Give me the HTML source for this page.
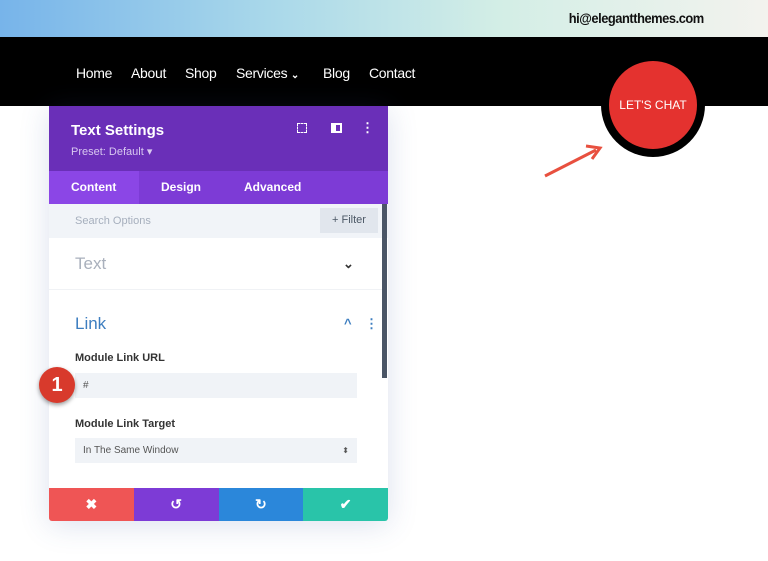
<!DOCTYPE html>
<html><head><meta charset="utf-8"><style>
*{margin:0;padding:0;box-sizing:border-box}
body{width:768px;height:561px;overflow:hidden;background:#fff;font-family:"Liberation Sans",sans-serif;position:relative}
.top{position:absolute;left:0;top:0;width:768px;height:37px;background:linear-gradient(90deg,#77b4ea 0%,#a9d8ea 35%,#d3eee6 65%,#f3f3ee 100%)}
.email{position:absolute;right:64px;top:10px;font-size:14px;font-weight:bold;color:#111;letter-spacing:-0.5px;transform:scaleX(0.92);transform-origin:right}
.nav{position:absolute;left:0;top:37px;width:768px;height:69px;background:#000}
.nav span{position:absolute;top:28px;color:#fff;font-size:14px;letter-spacing:-0.3px}
.chat{position:absolute;left:601px;top:53px;width:104px;height:104px;border-radius:50%;background:#000}
.chat div{position:absolute;left:8px;top:8px;width:88px;height:88px;border-radius:50%;background:#e4322f;color:#fff;font-size:12px;text-align:center;line-height:88px}
.panel{position:absolute;left:49px;top:106px;width:339px;height:415px;background:#fff;box-shadow:0 4px 30px rgba(60,90,160,.18);border-radius:0 0 3px 3px;overflow:hidden;font-family:"Liberation Sans",sans-serif}
.ph{height:65px;background:#6a2fb8;position:relative}
.ph .t{position:absolute;left:22px;top:16px;color:#fff;font-size:15px;font-weight:bold}
.ph .p{position:absolute;left:22px;top:39px;color:#d8c8f0;font-size:11px}
.tabs{height:33px;background:#7d3bd6;position:relative}
.tabs span{position:absolute;top:9px;color:#fff;font-size:12px;font-weight:bold}
.act{position:absolute;left:0;top:0;width:90px;height:33px;background:#8b46e6}
.search{height:34px;background:#f1f4f8;position:relative}
.search span{position:absolute;left:26px;top:11px;font-size:11px;color:#a6afbd}
.filter{position:absolute;left:271px;top:4px;width:58px;height:25px;background:#e1e6ed;font-size:11px;color:#4c5866;text-align:center;line-height:25px}
.sb{position:absolute;left:333px;top:98px;width:5px;height:174px;background:#4a5566}
.row{position:absolute;left:0;width:333px}
.lbl{position:absolute;left:26px;font-size:11px;font-weight:bold;color:#333}
.inp{position:absolute;left:26px;width:282px;height:25px;background:#f0f3f7;font-size:10px;color:#555;padding-left:8px;line-height:25px}
.btns{position:absolute;left:0;top:382px;width:339px;height:33px;display:flex}
.btns div{flex:1;color:#fff;font-size:14px;font-weight:bold;text-align:center;line-height:33px}
</style></head><body>
<div class="top"><div class="email">hi@elegantthemes.com</div></div>
<div class="nav">
<span style="left:76px">Home</span><span style="left:131px">About</span><span style="left:185px">Shop</span><span style="left:236px">Services <b style="font-size:10px">&#8964;</b></span><span style="left:323px">Blog</span><span style="left:369px">Contact</span>
</div>
<div class="chat"><div>LET'S CHAT</div></div>
<svg style="position:absolute;left:540px;top:140px" width="70" height="42"><line x1="5" y1="36" x2="56" y2="10" stroke="#e8503f" stroke-width="3"/><path d="M46 6 L60 8 L52 19" fill="none" stroke="#e8503f" stroke-width="3"/></svg>
<div class="panel">
<div class="ph"><div class="t">Text Settings</div><div class="p">Preset: Default ▾</div>
<span style="position:absolute;left:248px;top:17px;width:10px;height:10px;border:1.5px dashed #fff"></span>
<span style="position:absolute;left:282px;top:17px;width:11px;height:10px;border:2px solid #fff;border-left-width:5px"></span>
<span style="position:absolute;left:312px;top:14px;color:#fff;font-size:13px;font-weight:bold">⋮</span>
</div>
<div class="tabs"><div class="act"></div><span style="left:22px">Content</span><span style="left:112px">Design</span><span style="left:195px">Advanced</span></div>
<div class="search"><span>Search Options</span><div class="filter">+ Filter</div></div>
<div class="row" style="top:132px;height:52px;border-bottom:1px solid #f0f2f5"><span style="position:absolute;left:26px;top:16px;font-size:17px;color:#a9b0bc">Text</span><b style="position:absolute;left:294px;top:18px;font-size:13px;color:#333">&#8964;</b></div>
<span style="position:absolute;left:26px;top:208px;font-size:17px;color:#3d7ec0">Link</span>
<span style="position:absolute;left:295px;top:210px;font-size:13px;color:#3d7ec0;font-weight:bold">^</span>
<span style="position:absolute;left:316px;top:210px;font-size:13px;color:#3d7ec0;font-weight:bold">⋮</span>
<div class="lbl" style="top:246px">Module Link URL</div>
<div class="inp" style="top:267px">#</div>
<div class="lbl" style="top:312px">Module Link Target</div>
<div class="inp" style="top:332px">In The Same Window<span style="position:absolute;right:8px;font-size:8px">⬍</span></div>
<div class="sb"></div>
<div class="btns"><div style="background:#ef5555">✖</div><div style="background:#7d3bd6">↺</div><div style="background:#2b87da">↻</div><div style="background:#29c4a9">✔</div></div>
</div>
<div style="position:absolute;left:39px;top:367px;width:36px;height:36px;border-radius:50%;background:#d83a2c;box-shadow:0 2px 4px rgba(0,0,0,.4);color:#fff;font-size:20px;font-weight:bold;text-align:center;line-height:36px">1</div>
</body></html>
